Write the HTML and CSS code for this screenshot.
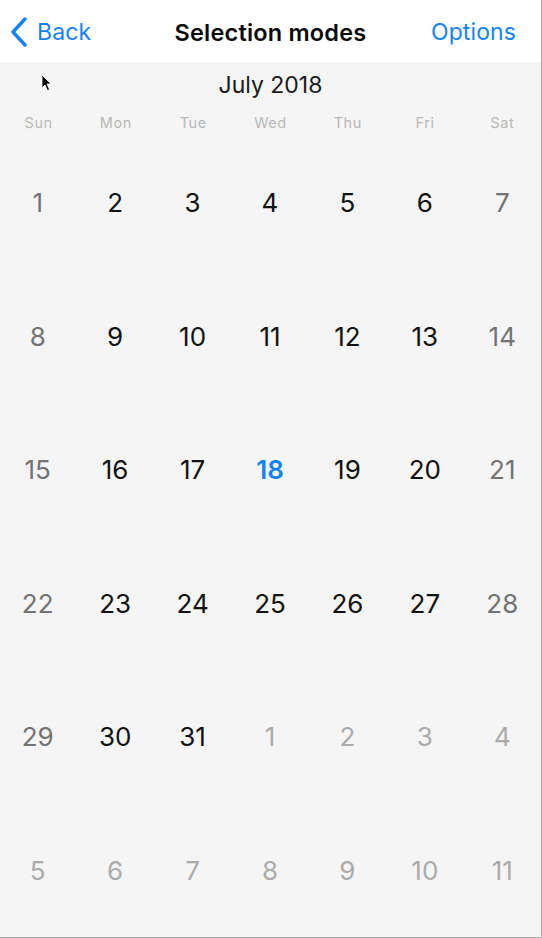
FILE: index.html
```html
<!DOCTYPE html>
<html>
<head>
<meta charset="utf-8">
<link rel="stylesheet" href="styles.css">
</head>
<body>
<div class="screen">
  <header class="navbar">
    <div class="nav-left">
      <svg class="chevron" width="18" height="30" viewBox="0 0 18 30"><path d="M15 2 L3 15 L15 28" fill="none" stroke="#1482fa" stroke-width="3.4" stroke-linecap="round" stroke-linejoin="round"/></svg>
      <span class="nav-link">Back</span>
    </div>
    <div class="nav-title">Selection modes</div>
    <div class="nav-right"><span class="nav-link">Options</span></div>
  </header>
  <main class="calendar">
    <svg class="cursor" width="12" height="18" viewBox="0 0 12 18"><path d="M1 1 L1 14 L4 11 L6.5 16.5 L8.5 15.5 L6 10 L10 10 Z" fill="#000" stroke="#fff" stroke-width="0.8"/></svg>
    <div class="month">July 2018</div>
    <div class="weekdays">
      <span>Sun</span><span>Mon</span><span>Tue</span><span>Wed</span><span>Thu</span><span>Fri</span><span>Sat</span>
    </div>
    <div class="days">
      <span class="wkend">1</span><span>2</span><span>3</span><span>4</span><span>5</span><span>6</span><span class="wkend">7</span>
      <span class="wkend">8</span><span>9</span><span>10</span><span>11</span><span>12</span><span>13</span><span class="wkend">14</span>
      <span class="wkend">15</span><span>16</span><span>17</span><span class="today">18</span><span>19</span><span>20</span><span class="wkend">21</span>
      <span class="wkend">22</span><span>23</span><span>24</span><span>25</span><span>26</span><span>27</span><span class="wkend">28</span>
      <span class="wkend">29</span><span>30</span><span>31</span><span class="other">1</span><span class="other">2</span><span class="other">3</span><span class="other">4</span>
      <span class="other">5</span><span class="other">6</span><span class="other">7</span><span class="other">8</span><span class="other">9</span><span class="other">10</span><span class="other">11</span>
    </div>
  </main>
</div>
</body>
</html>
```

FILE: styles.css
```css
html, body {
  margin: 0;
  padding: 0;
  background: #ffffff;
}
body {
  font-family: Inter, "Open Sans", "Liberation Sans", sans-serif;
}
.screen {
  width: 541px;
  height: 937px;
  border-right: 1px solid #a9a9a9;
  border-bottom: 1px solid #a9a9a9;
  display: flex;
  flex-direction: column;
  background: #f5f5f5;
}
.navbar {
  height: 62px;
  flex: none;
  background: #ffffff;
  display: grid;
  grid-template-columns: 1fr auto 1fr;
  align-items: center;
  padding-top: 2px;
  box-sizing: border-box;
}
.nav-left {
  display: flex;
  align-items: center;
  padding-left: 10px;
  gap: 9px;
}
.chevron {
  display: block;
}
.nav-link {
  color: #1482fa;
  font-size: 23px;
  letter-spacing: 0.1px;
}
.nav-title {
  font-size: 23.5px;
  font-weight: 600;
  color: #0a0a0a;
  letter-spacing: 0.2px;
}
.nav-right {
  display: flex;
  justify-content: flex-end;
  padding-right: 25px;
}
.calendar {
  flex: 1;
  display: flex;
  flex-direction: column;
  position: relative;
}
.cursor {
  position: absolute;
  left: 41px;
  top: 12px;
}
.month {
  height: 46px;
  display: flex;
  align-items: center;
  justify-content: center;
  font-size: 23px;
  color: #1a1a1a;
}
.weekdays {
  height: 28px;
  display: grid;
  grid-template-columns: repeat(7, 1fr);
  align-items: center;
  font-size: 14.5px;
  color: #b8b8b8;
  letter-spacing: 0.6px;
}
.weekdays span {
  text-align: center;
}
.days {
  flex: 1;
  display: grid;
  grid-template-columns: repeat(7, 1fr);
  grid-template-rows: repeat(6, 1fr);
  font-size: 26px;
  color: #111111;
  margin-left: -1px;
}
.days span {
  display: flex;
  align-items: center;
  justify-content: center;
}
.days .wkend {
  color: #737373;
}
.days .other {
  color: #ababab;
}
.days .today {
  color: #1482fa;
  font-weight: 600;
}
```
